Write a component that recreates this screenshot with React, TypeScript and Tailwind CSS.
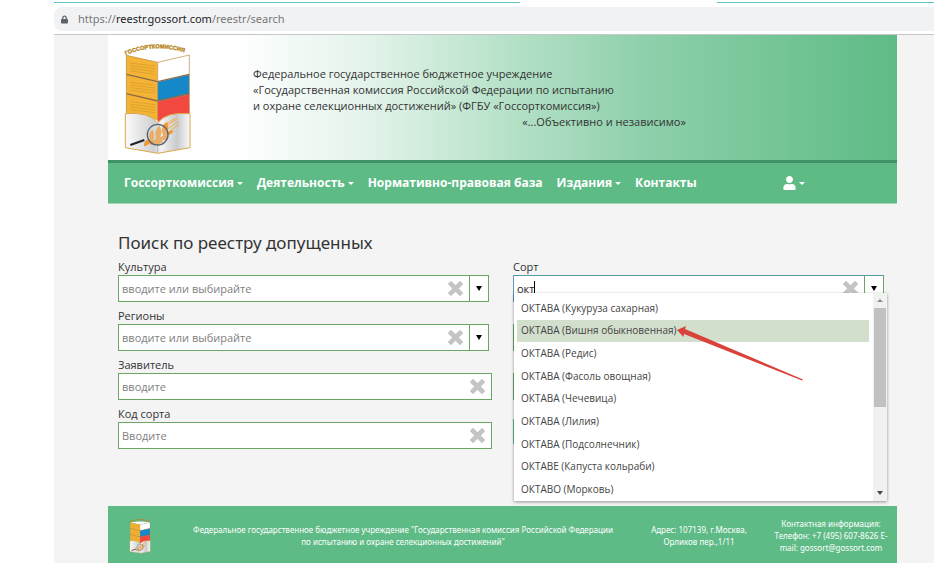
import React, { useState } from 'react';
import { FaLock, FaUser } from 'react-icons/fa';

const navItems = [
  { title: 'Госсорткомиссия', menu: true },
  { title: 'Деятельность', menu: true },
  { title: 'Нормативно-правовая база', menu: false },
  { title: 'Издания', menu: true },
  { title: 'Контакты', menu: false },
];

const fields = [
  { id: 'culture', label: 'Культура', placeholder: 'вводите или выбирайте', combo: true },
  { id: 'regions', label: 'Регионы', placeholder: 'вводите или выбирайте', combo: true },
  { id: 'applicant', label: 'Заявитель', placeholder: 'вводите', combo: false },
  { id: 'code', label: 'Код сорта', placeholder: 'Вводите', combo: false },
];

const options = [
  'ОКТАВА (Кукуруза сахарная)',
  'ОКТАВА (Вишня обыкновенная)',
  'ОКТАВА (Редис)',
  'ОКТАВА (Фасоль овощная)',
  'ОКТАВА (Чечевица)',
  'ОКТАВА (Лилия)',
  'ОКТАВА (Подсолнечник)',
  'ОКТАВЕ (Капуста кольраби)',
  'ОКТАВО (Морковь)',
];

const Logo: React.FC<{ id: string; className: string }> = ({ id, className }) => (
  <svg viewBox="70 34 207 345" className={`overflow-visible ${className}`} aria-hidden="true">
    <defs>
      <path id={`${id}-arc`} d="M78 77 Q174 35 280 77" />
      <linearGradient id={`${id}-page`} x1="0" x2="1">
        <stop offset="0" stopColor="#fafafa" />
        <stop offset="0.45" stopColor="#cfd0d2" />
        <stop offset="0.55" stopColor="#f4f4f4" />
        <stop offset="0.8" stopColor="#c9cacc" />
        <stop offset="1" stopColor="#fafafa" />
      </linearGradient>
    </defs>
    <path d="M80 78 Q174 56 269 78 L174 98Z" fill="#fff" />
    <text fontSize="17" fontWeight="700" fill="#b9851c" stroke="#b9851c" strokeWidth="1" className="font-['Liberation_Sans',sans-serif]">
      <textPath href={`#${id}-arc`}>ГОССОРТКОМИССИЯ</textPath>
    </text>
    <path d="M80 77 L174 98 V272 L80 250Z" fill="#f4b335" />
    <path d="M174 98 L269 76 V135 L174 157Z" fill="#fff" />
    <path d="M174 157 L269 135 V194 L174 216Z" fill="#1488c8" />
    <path d="M174 216 L269 194 V252 L174 276Z" fill="#f2483f" />
    {[100, 158, 216].map((y) => (
      <path
        key={y}
        d={`M92 ${y} L166 ${y + 9} M92 ${y + 8} L166 ${y + 17} M92 ${y + 16} L166 ${y + 25} M92 ${y + 24} L166 ${y + 33}`}
        stroke="#d39a2b"
        strokeWidth="2"
      />
    ))}
    <path d="M80 134 L174 156 L269 134 M80 192 L174 214 L269 192" fill="none" stroke="#8b6a4a" strokeWidth="4" />
    <path d="M80 77 L174 98 L269 76 V252 M80 77 V252 M174 98 V274" fill="none" stroke="#b78a3e" strokeWidth="2" />
    <path d="M77 252 Q150 246 174 280 Q198 246 271 252 V354 L174 371 L77 354Z" fill={`url(#${id}-page)`} stroke="#d9a84a" strokeWidth="3" />
    <path d="M174 280 V370" stroke="#a9a9a9" strokeWidth="2" />
    <path d="M133 345 Q136 328 154 330 Q150 346 133 350Z M150 328 Q144 308 158 300 Q168 316 160 332 Q182 322 190 336 Q174 350 150 344Z M168 318 Q164 298 180 288 Q190 304 182 322 Q198 312 206 324 Q192 338 168 330Z M186 304 Q186 286 202 276 Q210 292 202 308 Q214 300 222 304 Q212 320 190 318Z" fill="#f0962e" />
    <path d="M200 290 L234 266 M205 297 L238 274 M210 304 L238 284 M198 284 L226 266" stroke="#f2ac4b" strokeWidth="3" />
    <circle cx="174" cy="315" r="31" fill="#dfe9f0" fillOpacity="0.3" stroke="#59656c" strokeWidth="4" />
    <path d="M92 346 L134 331" stroke="#20242c" strokeWidth="7" />
  </svg>
);

const Caret: React.FC = () => (
  <span className="h-0 w-0 border-x-[3px] border-t-[3px] border-x-transparent border-t-current" />
);

const inputClass = 'h-full w-full min-w-0 bg-transparent px-[3px] text-[11px] text-neutral-800 outline-none placeholder:text-[#808080]';

const ClearButton: React.FC<{ onClick?: () => void }> = ({ onClick }) => (
  <button type="button" aria-label="Очистить" onClick={onClick} className="mr-[6px] shrink-0">
    <svg viewBox="0 0 15 15" className="h-[15px] w-[15px]" aria-hidden="true">
      <path d="M3 3 L12 12 M12 3 L3 12" stroke="#c4c4c4" strokeWidth="4.6" strokeLinecap="square" strokeLinejoin="round" />
    </svg>
  </button>
);

const DropButton: React.FC = () => (
  <button
    type="button"
    aria-label="Открыть список"
    className="flex w-[19px] shrink-0 items-center justify-center border-l border-[#6ba665]"
  >
    <span className="h-0 w-0 border-x-[3px] border-t-[5px] border-x-transparent border-t-black" />
  </button>
);

const Suggestions: React.FC = () => (
  <div className="absolute top-[18px] -right-[3px] left-px z-10 flex bg-white shadow-[0_1px_3px_rgba(0,0,0,0.4)]">
    <ul role="listbox" aria-label="Сорт" className="mt-1 grid h-[204px] flex-1 grid-rows-9 pr-1 pl-[3px]">
      {options.map((option, idx) => (
        <li
          key={option}
          role="option"
          aria-selected={idx === 1}
          className={`flex items-center px-1 text-[10px] text-[#444] ${idx === 1 ? 'bg-[#d3dfcd]' : ''}`}
        >
          {option}
        </li>
      ))}
    </ul>
    <div className="flex w-[14px] flex-col items-center bg-[#f1f1f1]">
      <span className="my-[6px] h-0 w-0 border-x-[3px] border-b-[3px] border-x-transparent border-b-[#8a8a8a]" />
      <span className="h-[99px] w-3 bg-[#c1c1c1]" />
      <span className="mt-auto mb-[6px] h-0 w-0 border-x-[3px] border-t-[4px] border-x-transparent border-t-[#444]" />
    </div>
    <svg viewBox="0 0 128 57" className="absolute top-8 left-[162px] h-[57px] w-32" aria-hidden="true">
      <path d="M1 5 L10 1 L9 4 L127 54.500 L126 55.500 L8 9 L7.500 12Z" fill="#d9423a" />
    </svg>
  </div>
);

export default function App() {
  const [query, setQuery] = useState('окт');

  return (
    <div className="flex h-screen flex-col overflow-hidden bg-white pr-[13px] pl-[54px] font-['Open_Sans',sans-serif] text-[#333]">
      {/* Browser bar */}
      <div className="flex pt-[2px]">
        <div className="h-px w-[53%] bg-[#62c5c8]" />
        <div className="w-[197px]" />
        <div className="h-px flex-1 bg-[#62c5c8]" />
      </div>
      <div className="mt-1 mb-[3px] flex h-6 items-center rounded-l-lg bg-[#f1f2f4] pl-[7px] font-['Noto_Sans',sans-serif] text-[11px]">
        <FaLock className="mr-[10px] h-[9px] w-[7px] text-[#5f6368]" />
        <span className="text-[#777]">https://</span>
        <span className="text-[#222]">reestr.gossort.com</span>
        <span className="text-[#777]">/reestr/search</span>
      </div>

      <div className="flex flex-1 flex-col border-t border-[#c4c7c6] bg-[#f4f4f4] pr-[37px] pl-[54px]">
        <header className="flex h-[128px] items-start border-b-[3px] border-[#40916a] bg-[linear-gradient(to_right,#fff_16%,#e3f3ea_33%,#b8e2c9_50%,#8ed0ab_68%,#5ebb86_100%)] pl-[15px]">
          <Logo id="top" className="mt-[6px] h-[115px] w-[69px]" />
          <div className="mt-[31px] ml-[61px] text-[11px] leading-4">
            <p>Федеральное государственное бюджетное учреждение</p>
            <p>«Государственная комиссия Российской Федерации по испытанию</p>
            <p>и охране селекционных достижений» (ФГБУ «Госсорткомиссия»)</p>
            <p className="-mr-[72px] text-right">«...Объективно и независимо»</p>
          </div>
        </header>

        <nav className="flex h-[41px] shrink-0 items-center gap-[14px] border-b border-[#a5d8bb] bg-[#5ebb86] pl-4 text-[12px] font-bold text-white">
          {navItems.map((item) => (
            <a key={item.title} href="#" className="flex items-center gap-[3px] whitespace-nowrap">
              {item.title}
              {item.menu && <Caret />}
            </a>
          ))}
          <button type="button" aria-label="Профиль" className="mr-[92px] ml-auto flex items-center gap-[3px]">
            <FaUser className="h-[14px] w-[13px]" />
            <Caret />
          </button>
        </nav>

        <main className="px-[10px] pt-[27px]">
          <h1 className="font-['Noto_Sans',sans-serif] text-[17px] leading-6">Поиск по реестру допущенных</h1>
          <form className="mt-1 grid grid-cols-2 gap-x-[21px]">
            <div>
              {fields.map((field) => (
                <div key={field.id} className="mb-[6px]">
                  <label htmlFor={field.id} className="block text-[11px] leading-4">
                    {field.label}
                  </label>
                  <div className={`flex h-[27px] items-stretch border border-[#6ba665] bg-white ${field.combo ? 'mr-[3px]' : ''}`}>
                    <input id={field.id} type="text" placeholder={field.placeholder} className={inputClass} />
                    <ClearButton />
                    {field.combo && <DropButton />}
                  </div>
                </div>
              ))}
            </div>

            <div>
              <label htmlFor="sort" className="block text-[11px] leading-4">
                Сорт
              </label>
              <div className="relative mr-[3px]">
                <div className="flex h-[27px] items-stretch border border-[#6ba665] border-t-[#559aa4] border-l-[#5a96c4] bg-white">
                  <input
                    id="sort"
                    type="text"
                    value={query}
                    onChange={(e) => setQuery(e.target.value)}
                    className={`${inputClass} caret-transparent`}
                  />
                  <ClearButton onClick={() => setQuery('')} />
                  <DropButton />
                </div>
                {query === 'окт' && <span className="absolute top-[6px] left-[21px] h-[14px] w-px bg-black" />}
                <Suggestions />
              </div>
              <div className="mt-[22px] h-[27px] border border-[#6ba665] bg-white" />
              <div className="mt-[22px] h-[27px] border border-[#6ba665] bg-white" />
              <div className="mt-[19px] h-[25px] w-20 bg-[#5ebb86]" />
            </div>
          </form>
        </main>

        <footer className="mt-[51px] flex flex-1 items-start bg-[#5ebb86] pt-3 text-center font-['Noto_Sans',sans-serif] text-[8px] leading-3 text-white">
          <Logo id="bottom" className="ml-[21px] h-9 w-[22px]" />
          <p className="ml-[38px] w-[428px] pt-[6px]">
            Федеральное государственное бюджетное учреждение "Государственная комиссия Российской Федерации по испытанию и охране селекционных достижений"
          </p>
          <p className="ml-[26px] w-[112px] pt-[6px]">Адрес: 107139, г.Москва, Орликов пер.,1/11</p>
          <p className="mr-[3px] ml-auto w-[126px]">
            Контактная информация: Телефон: +7 (495) 607-8626 E-mail: gossort@gossort.com
          </p>
        </footer>
      </div>
    </div>
  );
}
